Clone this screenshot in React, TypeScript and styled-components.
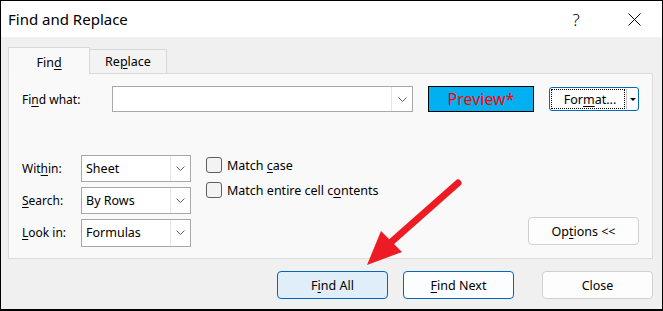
import React from 'react';
import styled, { createGlobalStyle } from 'styled-components';

const GlobalStyle = createGlobalStyle`
  html, body {
    margin: 0;
    padding: 0;
    background: #ffffff;
  }
  body {
    font-family: "Noto Sans", "Open Sans", sans-serif;
    font-size: 12px;
    color: #000;
  }
  * {
    box-sizing: border-box;
  }
`;

const Window = styled.div`
  position: relative;
  width: 663px;
  height: 311px;
  border: 1px solid #000;
  border-bottom-width: 2px;
  display: flex;
  flex-direction: column;
  overflow: hidden;
`;

const TitleBar = styled.div`
  height: 36px;
  flex: none;
  background: #ffffff;
  display: flex;
  align-items: center;
  padding-left: 7px;
`;

const Title = styled.div`
  font-size: 15px;
  flex: 1;
  padding-bottom: 1px;
`;

const TitleButton = styled.div<{ $gap: number }>`
  width: 46px;
  height: 36px;
  margin-right: ${p => p.$gap}px;
  display: flex;
  align-items: center;
  justify-content: center;
  font-size: 17px;
  font-weight: 300;
`;

const Body = styled.div`
  flex: 1;
  background: #f0f0f0;
  padding: 10px 9px 0 7px;
  display: flex;
  flex-direction: column;
`;

const TabStrip = styled.div`
  display: flex;
  align-items: flex-end;
  height: 27px;
  margin-bottom: -1px;
  position: relative;
  z-index: 1;
`;

const Tab = styled.div<{ $active?: boolean; $width: number }>`
  width: ${p => p.$width}px;
  height: ${p => (p.$active ? 27 : 25)}px;
  display: flex;
  align-items: center;
  justify-content: center;
  background: ${p => (p.$active ? '#f9f9f9' : '#f3f3f3')};
  border: 1px solid #d9d9d9;
  border-bottom: ${p => (p.$active ? 'none' : '1px solid #d9d9d9')};
  margin-left: ${p => (p.$active ? 0 : -1)}px;
  padding-top: ${p => (p.$active ? 2 : 0)}px;
  font-size: 12.5px;
`;

const Panel = styled.div`
  height: 186px;
  border: 1px solid #dcdcdc;
  background: #f9f9f9;
  padding: 12px 13px 0 13px;
  display: flex;
  flex-direction: column;
`;

const FindRow = styled.div`
  display: flex;
  align-items: center;
  height: 26px;
`;

const Label = styled.div<{ $width: number }>`
  width: ${p => p.$width}px;
  flex: none;
  white-space: nowrap;
`;

const Key = styled.span`
  text-decoration: underline;
  text-underline-offset: 2px;
  text-decoration-thickness: 1px;
`;

const Combo = styled.div<{ $width: number; $height: number; $arrow: number }>`
  width: ${p => p.$width}px;
  height: ${p => p.$height}px;
  flex: none;
  border: 1px solid #a8a8a8;
  background: #ffffff;
  display: flex;
  align-items: stretch;

  & > span {
    flex: 1;
    display: flex;
    align-items: center;
    padding-left: 4px;
    font-size: 12.5px;
  }

  & > i {
    width: ${p => p.$arrow}px;
    border-left: 1px solid #e6e6e6;
    display: flex;
    align-items: center;
    justify-content: center;
  }
`;

const Preview = styled.div`
  width: 106px;
  height: 26px;
  margin-left: 15px;
  background: #00b0f0;
  border: 1px solid #000;
  color: #ff0000;
  font-size: 16px;
  display: flex;
  align-items: center;
  justify-content: center;
`;

const SplitButton = styled.div`
  width: 90px;
  height: 24px;
  margin-left: 15px;
  border: 1px solid #0067c0;
  border-radius: 3px;
  background: #fdfdfd;
  display: flex;
  align-items: stretch;
  padding: 1px 0 1px 1px;
`;

const SplitMain = styled.div`
  flex: 1;
  border: 1px dotted #000;
  display: flex;
  align-items: center;
  justify-content: center;
  padding-left: 4px;
  font-size: 12.5px;
`;

const SplitArrow = styled.div`
  width: 12px;
  margin-left: 1px;
  border-left: 1px solid #c8c8c8;
  display: flex;
  align-items: center;
  justify-content: center;
`;

const OptionsArea = styled.div`
  display: flex;
  margin-top: 43px;
`;

const FieldGrid = styled.div`
  display: grid;
  grid-template-columns: 59px 110px;
  grid-auto-rows: 27px;
  row-gap: 5px;
  align-items: center;
`;

const Checks = styled.div`
  display: flex;
  flex-direction: column;
  gap: 9px;
  margin-left: 15px;
  margin-top: 2px;
`;

const CheckRow = styled.label`
  display: flex;
  align-items: center;
  gap: 5px;
  height: 16px;
  font-size: 12.5px;
`;

const Box = styled.span`
  width: 16px;
  height: 16px;
  border: 1px solid #5f5f5f;
  border-radius: 3px;
  background: #f3f3f3;
`;

const Button = styled.div<{ $primary?: boolean; $focus?: boolean }>`
  width: 111px;
  height: 28px;
  flex: none;
  border-radius: 4px;
  border: 1px solid ${p => (p.$primary || p.$focus ? '#0067c0' : '#d0d0d0')};
  background: ${p => (p.$primary ? '#e0eef9' : p.$focus ? '#fbfdff' : '#fdfdfd')};
  display: flex;
  align-items: center;
  justify-content: center;
  font-size: 12.5px;
`;

const OptionsButton = styled(Button)`
  margin-left: auto;
  margin-top: 62px;
`;

const ButtonRow = styled.div`
  display: flex;
  justify-content: flex-end;
  margin-top: 12px;
`;

const Overlay = styled.svg`
  position: absolute;
  left: -1px;
  top: -1px;
  pointer-events: none;
`;

const Chevron = () => (
  <svg width="9" height="5" viewBox="0 0 9 5">
    <path d="M0.5 0.5 L4.5 4.5 L8.5 0.5" fill="none" stroke="#606060" strokeWidth="1" />
  </svg>
);

export default function App() {
  return (
    <>
      <GlobalStyle />
      <Window>
        <TitleBar>
          <Title>Find and Replace</Title>
          <TitleButton $gap={12}>?</TitleButton>
          <TitleButton $gap={5}>
            <svg width="13" height="13" viewBox="0 0 13 13">
              <path d="M0.5 0.5 L12.5 12.5 M12.5 0.5 L0.5 12.5" stroke="#000" strokeWidth="1" />
            </svg>
          </TitleButton>
        </TitleBar>
        <Body>
          <TabStrip>
            <Tab $active $width={82}>
              Fin<Key>d</Key>
            </Tab>
            <Tab $width={78}>
              Re<Key>p</Key>lace
            </Tab>
          </TabStrip>
          <Panel>
            <FindRow>
              <Label $width={90}>
                Fi<Key>n</Key>d what:
              </Label>
              <Combo $width={301} $height={26} $arrow={21}>
                <span />
                <i>
                  <Chevron />
                </i>
              </Combo>
              <Preview>Preview*</Preview>
              <SplitButton>
                <SplitMain>
                  For<Key>m</Key>at...
                </SplitMain>
                <SplitArrow>
                  <svg width="6" height="3" viewBox="0 0 6 3">
                    <path d="M0 0 L6 0 L3 3 Z" fill="#000" />
                  </svg>
                </SplitArrow>
              </SplitButton>
            </FindRow>
            <OptionsArea>
              <FieldGrid>
                <Label $width={59}>
                  Wit<Key>h</Key>in:
                </Label>
                <Combo $width={110} $height={27} $arrow={20}>
                  <span>Sheet</span>
                  <i>
                    <Chevron />
                  </i>
                </Combo>
                <Label $width={59}>
                  <Key>S</Key>earch:
                </Label>
                <Combo $width={110} $height={27} $arrow={20}>
                  <span>By Rows</span>
                  <i>
                    <Chevron />
                  </i>
                </Combo>
                <Label $width={59}>
                  <Key>L</Key>ook in:
                </Label>
                <Combo $width={110} $height={28} $arrow={20}>
                  <span>Formulas</span>
                  <i>
                    <Chevron />
                  </i>
                </Combo>
              </FieldGrid>
              <Checks>
                <CheckRow>
                  <Box />
                  <span>
                    Match <Key>c</Key>ase
                  </span>
                </CheckRow>
                <CheckRow>
                  <Box />
                  <span>
                    Match entire cell c<Key>o</Key>ntents
                  </span>
                </CheckRow>
              </Checks>
              <OptionsButton>
                Op<Key>t</Key>ions &lt;&lt;
              </OptionsButton>
            </OptionsArea>
          </Panel>
          <ButtonRow>
            <Button $primary>
              F<Key>i</Key>nd All
            </Button>
            <Button $focus style={{ marginLeft: 15 }}>
              <Key>F</Key>ind Next
            </Button>
            <Button style={{ marginLeft: 28 }}>Close</Button>
          </ButtonRow>
        </Body>
        <Overlay width="663" height="311" viewBox="0 0 663 311">
          <line x1="458" y1="183" x2="389" y2="244" stroke="#ed1c24" strokeWidth="7" strokeLinecap="round" />
          <polygon points="367,265 381,231 402,252" fill="#ed1c24" />
        </Overlay>
      </Window>
    </>
  );
}
